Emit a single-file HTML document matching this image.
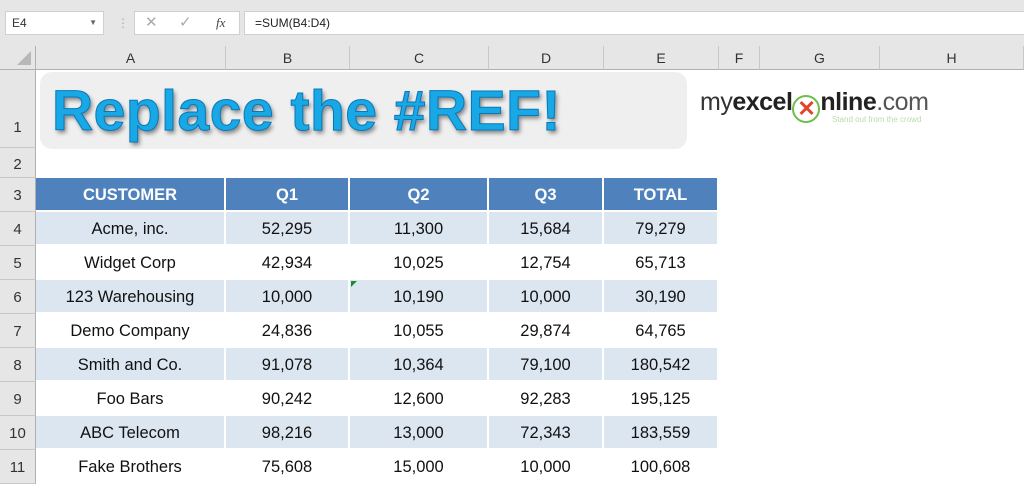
<!DOCTYPE html>
<html><head><meta charset="utf-8"><style>
*{margin:0;padding:0;box-sizing:border-box}
body{width:1024px;height:484px;overflow:hidden;background:#fff;font-family:"Liberation Sans",sans-serif;position:relative}
.a{position:absolute}
.top{left:0;top:0;width:1024px;height:46px;background:#e6e6e6}
.box{background:#fff;border:1px solid #d0d0d0}
.ch{top:46px;height:24px;background:#e6e6e6;border-right:1px solid #c8c8c8;border-bottom:1px solid #b0b0b0;font-size:14px;color:#333;text-align:center;line-height:24px}
.rh{left:0;width:36px;background:#e6e6e6;border-bottom:1px solid #c8c8c8;border-right:1px solid #b0b0b0;font-size:15px;color:#333;text-align:center}
.c{font-size:16.5px;color:#111;text-align:center;border-right:2px solid #fff;border-bottom:2px solid #fff}
</style></head><body>
<div class="a top"></div>
<div class="a box" style="left:5px;top:11px;width:99px;height:24px;font-size:12px;line-height:22px;padding-left:6px;color:#333">E4<span class="a" style="right:6px;top:0;font-size:8px;color:#666">▼</span></div>
<div class="a" style="left:117px;top:16px;color:#aaa;font-size:12px">⋮</div>
<div class="a box" style="left:134px;top:11px;width:106px;height:24px;color:#aaa;font-size:15px;line-height:22px"><span class="a" style="left:10px">✕</span><span class="a" style="left:44px">✓</span><span class="a" style="left:81px;color:#444;font-family:'Liberation Serif',serif;font-style:italic;font-size:13px">fx</span></div>
<div class="a box" style="left:244px;top:11px;width:790px;height:24px;font-size:12px;line-height:22px;padding-left:10px;color:#222">=SUM(B4:D4)</div>
<div class="a" style="left:0;top:46px;width:36px;height:24px;background:#e6e6e6;border-right:1px solid #b0b0b0;border-bottom:1px solid #b0b0b0"><div class="a" style="right:4px;bottom:4px;width:0;height:0;border-left:14px solid transparent;border-bottom:14px solid #b8b8b8"></div></div>
<div class="a ch" style="left:36px;width:190px">A</div>
<div class="a ch" style="left:226px;width:124px">B</div>
<div class="a ch" style="left:350px;width:139px">C</div>
<div class="a ch" style="left:489px;width:115px">D</div>
<div class="a ch" style="left:604px;width:115px">E</div>
<div class="a ch" style="left:719px;width:41px">F</div>
<div class="a ch" style="left:760px;width:120px">G</div>
<div class="a ch" style="left:880px;width:144px">H</div>
<div class="a rh" style="top:70px;height:78px;line-height:116px">1</div>
<div class="a rh" style="top:148px;height:30px;line-height:34px">2</div>
<div class="a rh" style="top:178px;height:34px;line-height:36px">3</div>
<div class="a rh" style="top:212px;height:34px;line-height:36px">4</div>
<div class="a rh" style="top:246px;height:34px;line-height:36px">5</div>
<div class="a rh" style="top:280px;height:34px;line-height:36px">6</div>
<div class="a rh" style="top:314px;height:34px;line-height:36px">7</div>
<div class="a rh" style="top:348px;height:34px;line-height:36px">8</div>
<div class="a rh" style="top:382px;height:34px;line-height:36px">9</div>
<div class="a rh" style="top:416px;height:34px;line-height:36px">10</div>
<div class="a rh" style="top:450px;height:34px;line-height:36px">11</div>
<div class="a" style="left:40px;top:72px;width:647px;height:77px;background:#efefef;border-radius:12px"></div>
<div class="a" style="left:52px;top:78px;font-size:57px;font-weight:bold;color:#18a8e6;letter-spacing:0.5px;-webkit-text-stroke:1px #0a78b8;text-shadow:2px 3px 4px rgba(0,0,0,.45)">Replace the #REF!</div>
<div class="a" style="left:700px;top:88px;font-size:25px;color:#333;letter-spacing:-0.5px;white-space:nowrap">my<b style="color:#222">excel</b><span style="display:inline-block;width:28px;height:28px;border:2px solid #6cbf4a;border-radius:50%;vertical-align:-6px;text-align:center;font-size:22px;line-height:24px;color:#e0442a;font-weight:bold">✕</span><b style="color:#222">nline</b><span style="color:#555">.com</span></div>
<div class="a" style="left:832px;top:115px;font-size:8px;color:#b9dca8">Stand out from the crowd</div>
<div id="t"></div>
<script>
var cols=[[36,190],[226,124],[350,139],[489,115],[604,115]];
var rows=[["CUSTOMER","Q1","Q2","Q3","TOTAL"],["Acme, inc.","52,295","11,300","15,684","79,279"],["Widget Corp","42,934","10,025","12,754","65,713"],["123 Warehousing","10,000","10,190","10,000","30,190"],["Demo Company","24,836","10,055","29,874","64,765"],["Smith and Co.","91,078","10,364","79,100","180,542"],["Foo Bars","90,242","12,600","92,283","195,125"],["ABC Telecom","98,216","13,000","72,343","183,559"],["Fake Brothers","75,608","15,000","10,000","100,608"]];
var h="";
rows.forEach(function(r,i){var y=178+i*34;var bg=i==0?"#4f81bd":(i%2?"#dce6f1":"#fff");var col=i==0?"#fff":"#111";var fw=i==0?"bold":"normal";
r.forEach(function(t,j){h+='<div class="a c" style="left:'+cols[j][0]+'px;top:'+y+'px;width:'+cols[j][1]+'px;height:34px;line-height:34px;background:'+bg+';color:'+col+';font-weight:'+fw+'">'+t+'</div>';});});
h+='<div class="a" style="left:351px;top:281px;width:0;height:0;border-top:6px solid #1e8a2e;border-right:6px solid transparent"></div>';
document.getElementById("t").innerHTML=h;
</script>
</body></html>
